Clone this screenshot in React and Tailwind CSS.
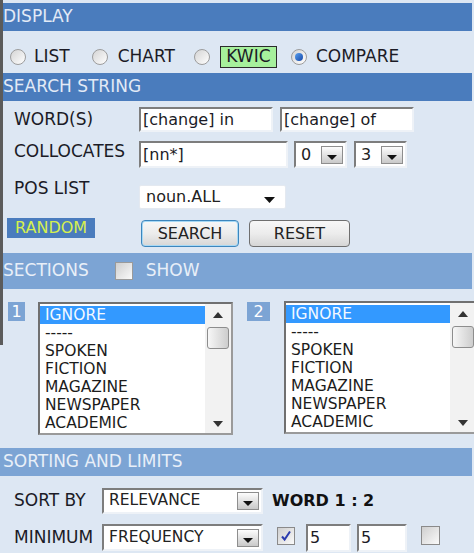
import React from 'react';

const inset = 'border-2 border-t-[#7d7d7d] border-l-[#7d7d7d] border-r-[#eef2f7] border-b-[#eef2f7] bg-white';

function Header({ children, light, className = '' }) {
  return (
    <div
      className={`mr-[2px] flex items-center pl-[3px] text-[17px] ${
        light ? 'bg-[#7ca4d4] text-[#e8eff8]' : 'bg-[#4a7cbd] text-[#e2eaf6]'
      } ${className}`}
    >
      {children}
    </div>
  );
}

function Radio({ checked }) {
  return (
    <span className="flex h-[16px] w-[16px] shrink-0 items-center justify-center rounded-full border border-[#9c9c9c] bg-linear-to-br from-[#d4d4d4] to-[#ffffff]">
      {checked && <span className="h-[8px] w-[8px] rounded-full bg-linear-to-br from-[#5aa0ef] to-[#1848a8]" />}
    </span>
  );
}

function Checkbox({ checked, className = '' }) {
  return (
    <span className={`flex h-[18px] w-[18px] shrink-0 items-center justify-center border border-[#8a8a8a] bg-linear-to-br from-[#cfcfcf] to-[#fafafa] ${className}`}>
      {checked && (
        <svg width="12" height="12" viewBox="0 0 12 12">
          <path d="M2 6.5l2.6 3L10 1.5" fill="none" stroke="#2c3cae" strokeWidth="2" />
        </svg>
      )}
    </span>
  );
}

function DropBtn() {
  return (
    <span className="flex h-[18px] w-[22px] shrink-0 items-end justify-center border border-[#8e8e8e] bg-linear-to-b from-[#fdfdfd] to-[#c9c9c9] pb-[3px]">
      <svg width="10" height="5" viewBox="0 0 10 5">
        <path d="M0 0h10L5 5z" fill="#111" />
      </svg>
    </span>
  );
}

function InsetSelect({ value, className = '', text = 'text-[16px]' }) {
  return (
    <div className={`flex shrink-0 items-center justify-between pl-[5px] pr-[2px] ${inset} ${className}`}>
      <span className={`${text} text-[#222]`}>{value}</span>
      <DropBtn />
    </div>
  );
}

function Button({ children, focused, className = '' }) {
  return (
    <button
      className={`flex h-[27px] shrink-0 items-center justify-center rounded-[4px] border bg-linear-to-b from-[#f7f7f7] via-[#ececec] to-[#d6d6d6] text-[16px] text-[#222] ${
        focused ? 'border-[#3d86bd] shadow-[inset_0_0_0_1px_#a6d8f5]' : 'border-[#6f6f6f]'
      } ${className}`}
    >
      {children}
    </button>
  );
}

const sections = ['IGNORE', '-----', 'SPOKEN', 'FICTION', 'MAGAZINE', 'NEWSPAPER', 'ACADEMIC'];

function ListBox({ className = '' }) {
  return (
    <div className={`flex h-[133px] shrink-0 border-2 border-[#707070] border-r-[#9a9a9a] border-b-[#9a9a9a] bg-white ${className}`}>
      <div className="flex-1 overflow-hidden pt-[2px]">
        {sections.map((s, i) => (
          <div
            key={s}
            className={`pl-[5px] text-[15.5px] leading-[18px] ${i === 0 ? 'bg-[#3399ff] text-[#f2f8ff]' : 'text-[#1c1c1c]'}`}
          >
            {s}
          </div>
        ))}
      </div>
      <div className="flex w-[26px] shrink-0 flex-col items-center bg-[#f2f2f2] pt-[8px]">
        <svg width="10" height="6" viewBox="0 0 10 6">
          <path d="M0 6h10L5 0z" fill="#333" />
        </svg>
        <div className="mt-[9px] h-[22px] w-[22px] rounded-[3px] border border-[#8d8d8d] bg-linear-to-r from-[#f7f7f7] to-[#cdcdcd]" />
        <div className="flex-1" />
        <svg className="mb-[6px]" width="10" height="6" viewBox="0 0 10 6">
          <path d="M0 0h10L5 6z" fill="#333" />
        </svg>
      </div>
    </div>
  );
}

function App() {
  return (
    <div className="relative h-[553px] w-[474px] overflow-hidden bg-[#dde7f3] pt-[3px] font-['DejaVu_Sans',sans-serif] text-[#1b1b26]">
      <div className="absolute left-0 top-0 h-[345px] w-[3px] bg-[#5b5b5b]" />

      <Header className="h-[28px]">DISPLAY</Header>
      <div className="flex h-[42px] items-center pl-[10px] pt-[9px] text-[17px]">
        <Radio />
        <span className="ml-[8px]">LIST</span>
        <span className="ml-[22px]"><Radio /></span>
        <span className="ml-[10px]">CHART</span>
        <span className="ml-[19px]"><Radio /></span>
        <span className="ml-[10px] flex h-[22px] w-[57px] items-center justify-center border border-[#2b2b2b] bg-[#a6f09c]">KWIC</span>
        <span className="ml-[14px]"><Radio checked /></span>
        <span className="ml-[9px]">COMPARE</span>
      </div>

      <Header className="h-[28px]">SEARCH STRING</Header>
      <div className="pl-[14px] pt-[6px] text-[17px]">
        <div className="flex h-[25px] items-center">
          <span className="w-[125px] shrink-0">WORD(S)</span>
          <div className={`flex h-[25px] w-[134px] shrink-0 items-center pl-[2px] text-[16px] ${inset}`}>[change] in</div>
          <div className={`ml-[7px] flex h-[25px] w-[134px] shrink-0 items-center pl-[2px] text-[16px] ${inset}`}>[change] of</div>
        </div>
        <div className="mt-[9px] flex h-[27px] items-start">
          <span className="w-[125px] shrink-0 leading-[20px]">COLLOCATES</span>
          <div className={`flex h-[27px] w-[149px] shrink-0 items-center pl-[2px] text-[16px] ${inset}`}>[nn*]</div>
          <InsetSelect value="0" className="ml-[6px] h-[27px] w-[53px]" />
          <InsetSelect value="3" className="ml-[7px] h-[27px] w-[53px]" />
        </div>
        <div className="mt-[10px] flex h-[31px] items-start">
          <span className="w-[125px] shrink-0 leading-[20px]">POS LIST</span>
          <div className="mt-[7px] flex h-[24px] w-[147px] shrink-0 items-center justify-between rounded-[2px] border border-[#e4e9f0] bg-white pl-[6px] pr-[10px]">
            <span className="text-[16px] text-[#222]">noun.ALL</span>
            <svg className="mt-[6px]" width="11" height="6" viewBox="0 0 11 6">
              <path d="M0 0h11L5.5 6z" fill="#111" />
            </svg>
          </div>
        </div>
        <div className="-ml-[7px] mt-[9px] flex items-start">
          <span className="flex h-[20px] w-[88px] shrink-0 items-center bg-[#4a7cbd] pl-[8px] text-[16px] text-[#d6f04e]">RANDOM</span>
          <Button focused className="ml-[46px] mt-[2px] w-[98px]">SEARCH</Button>
          <Button className="ml-[10px] mt-[2px] w-[101px]">RESET</Button>
        </div>
      </div>

      <Header light className="mt-[6px] h-[36px]">
        <span>SECTIONS</span>
        <Checkbox className="ml-[26px] h-[16px] w-[16px] border-[#9a9a9a]" />
        <span className="ml-[13px]">SHOW</span>
      </Header>
      <div className="flex h-[159px] pt-[13px]">
        <span className="ml-[8px] flex h-[19px] w-[17px] shrink-0 items-center justify-center bg-[#7ca4d4] text-[16px] text-white">1</span>
        <ListBox className="ml-[13px] w-[195px]" />
        <span className="ml-[14px] flex h-[19px] w-[23px] shrink-0 items-center justify-center bg-[#7ca4d4] text-[16px] text-white">2</span>
        <ListBox className="ml-[14px] mt-[-1px] w-[194px]" />
      </div>

      <Header light className="h-[28px]">SORTING AND LIMITS</Header>
      <div className="pl-[14px] pt-[12px] text-[17px]">
        <div className="flex h-[25px] items-center">
          <span className="w-[88px] shrink-0">SORT BY</span>
          <InsetSelect value="RELEVANCE" text="text-[15.5px]" className="h-[26px] w-[161px]" />
          <span className="ml-[9px] shrink-0 text-[16px] font-bold text-[#111]">WORD 1 : 2</span>
        </div>
        <div className="mt-[11px] flex h-[27px] items-center">
          <span className="w-[88px] shrink-0">MINIMUM</span>
          <InsetSelect value="FREQUENCY" text="text-[15.5px]" className="h-[27px] w-[161px]" />
          <Checkbox checked className="mb-[4px] ml-[14px]" />
          <div className={`ml-[11px] flex h-[28px] w-[45px] shrink-0 items-center pl-[2px] text-[16px] ${inset}`}>5</div>
          <div className={`ml-[6px] flex h-[28px] w-[50px] shrink-0 items-center pl-[2px] text-[16px] ${inset}`}>5</div>
          <Checkbox className="mb-[4px] ml-[14px] h-[19px] w-[19px]" />
        </div>
      </div>
    </div>
  );
}

export default App;
